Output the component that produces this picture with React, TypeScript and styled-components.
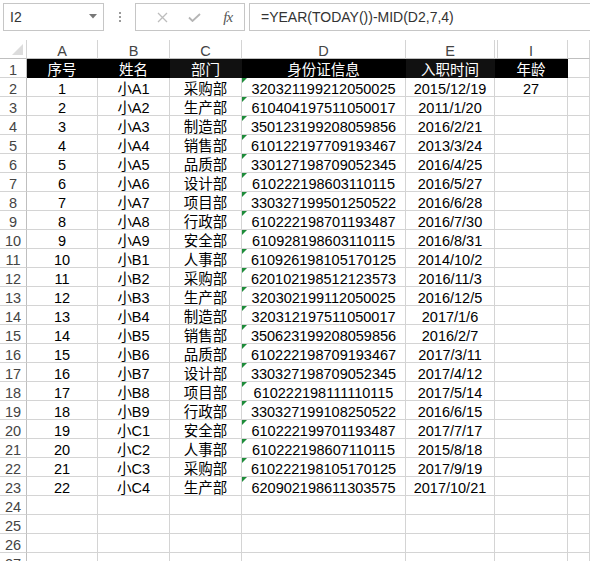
import React from "react";
import styled, { createGlobalStyle } from "styled-components";

const GlobalStyle = createGlobalStyle`
  html, body {
    margin: 0;
    padding: 0;
    background: #fff;
  }

  body {
    width: 590px;
    height: 561px;
    overflow: hidden;
    font-family: "Liberation Sans", "Noto Sans CJK SC", sans-serif;
  }
`;

const Page = styled.div`
  width: 590px;
  height: 561px;
  overflow: hidden;
  background: #fff;
`;

const FormulaBar = styled.div`
  height: 40px;
  padding: 3px 0 0 3px;
  box-sizing: border-box;
  display: flex;
  align-items: flex-start;
`;

const NameBox = styled.div`
  width: 101px;
  height: 28px;
  box-sizing: border-box;
  border: 1px solid #c6c6c6;
  display: flex;
  align-items: center;
  justify-content: space-between;
  padding: 0 6px 1px 6px;
  font-size: 14px;
  color: #333;
`;

const Grip = styled.div`
  width: 31px;
  height: 28px;
  display: flex;
  flex-direction: column;
  align-items: center;
  justify-content: center;
  gap: 2px;

  & > span {
    width: 2px;
    height: 2px;
    background: #9a9a9a;
  }
`;

const FxBox = styled.div`
  width: 110px;
  height: 28px;
  box-sizing: border-box;
  border: 1px solid #c6c6c6;
  display: grid;
  grid-template-columns: 10px 1fr 1fr 1fr;
  align-items: center;
`;

const FxButton = styled.div`
  display: flex;
  align-items: center;
  justify-content: center;
  height: 100%;
`;

const FxLabel = styled.span`
  font-family: "Liberation Serif", "DejaVu Serif", serif;
  font-style: italic;
  font-size: 15px;
  color: #555;
  letter-spacing: -1px;
`;

const FormulaInput = styled.div`
  flex: 1;
  height: 28px;
  margin-left: 4px;
  box-sizing: border-box;
  border: 1px solid #c6c6c6;
  border-right: none;
  display: flex;
  align-items: center;
  padding: 0 0 1px 11px;
  font-size: 14px;
  color: #333;
  white-space: nowrap;
`;

const Sheet = styled.div`
  display: grid;
  grid-template-columns: 27px 71px 72px 72px 164px 89px 73px 1fr;
  grid-auto-rows: 19px;
`;

const Corner = styled.div`
  position: relative;
  box-sizing: border-box;
  border-right: 1px solid #d4d4d4;
  border-bottom: 1px solid #bfbfbf;

  &::after {
    content: "";
    position: absolute;
    right: 3px;
    bottom: 3px;
    border-style: solid;
    border-width: 0 0 11px 11px;
    border-color: transparent transparent #dcdcdc transparent;
  }
`;

const ColHead = styled.div<{ $gapBefore?: boolean }>`
  position: relative;
  box-sizing: border-box;
  border-right: 1px solid #d4d4d4;
  border-bottom: 1px solid #bfbfbf;
  padding-top: 4px;
  line-height: 14px;
  font-size: 14.5px;
  color: #444;
  text-align: center;

  &::before {
    content: "";
    display: ${({ $gapBefore }) => ($gapBefore ? "block" : "none")};
    position: absolute;
    left: 2px;
    top: 0;
    bottom: 0;
    width: 1px;
    background: #d4d4d4;
  }
`;

const RowHead = styled.div`
  box-sizing: border-box;
  border-right: 1px solid #bfbfbf;
  border-bottom: 1px solid #d4d4d4;
  padding-top: 4px;
  line-height: 14px;
  font-size: 14.5px;
  color: #444;
  text-align: center;
`;

type Tone = "plain" | "black" | "charcoal";

const toneBg: Record<Tone, string> = {
  plain: "#fff",
  black: "#000",
  charcoal: "#111",
};

const Cell = styled.div<{ $tone?: Tone; $flag?: boolean }>`
  position: relative;
  box-sizing: border-box;
  border-right: 1px solid ${({ $tone = "plain" }) => ($tone === "plain" ? "#d4d4d4" : toneBg[$tone])};
  border-bottom: 1px solid ${({ $tone = "plain" }) => ($tone === "plain" ? "#d4d4d4" : toneBg[$tone])};
  background: ${({ $tone = "plain" }) => toneBg[$tone]};
  color: ${({ $tone = "plain" }) => ($tone === "plain" ? "#000" : "#fff")};
  padding-top: 4px;
  line-height: 14px;
  font-size: 14.5px;
  text-align: center;
  white-space: nowrap;
  overflow: hidden;

  &::before {
    content: "";
    display: ${({ $flag }) => ($flag ? "block" : "none")};
    position: absolute;
    left: 0;
    top: 0;
    border-style: solid;
    border-width: 5px 5px 0 0;
    border-color: #1e8c3a transparent transparent transparent;
  }
`;

const columns = ["A", "B", "C", "D", "E", "I", ""];

const headers = ["序号", "姓名", "部门", "身份证信息", "入职时间", "年龄"];

const people: [string, string, string, string][] = [
  ["小A1", "采购部", "320321199212050025", "2015/12/19"],
  ["小A2", "生产部", "610404197511050017", "2011/1/20"],
  ["小A3", "制造部", "350123199208059856", "2016/2/21"],
  ["小A4", "销售部", "610122197709193467", "2013/3/24"],
  ["小A5", "品质部", "330127198709052345", "2016/4/25"],
  ["小A6", "设计部", "610222198603110115", "2016/5/27"],
  ["小A7", "项目部", "330327199501250522", "2016/6/28"],
  ["小A8", "行政部", "610222198701193487", "2016/7/30"],
  ["小A9", "安全部", "610928198603110115", "2016/8/31"],
  ["小B1", "人事部", "610926198105170125", "2014/10/2"],
  ["小B2", "采购部", "620102198512123573", "2016/11/3"],
  ["小B3", "生产部", "320302199112050025", "2016/12/5"],
  ["小B4", "制造部", "320312197511050017", "2017/1/6"],
  ["小B5", "销售部", "350623199208059856", "2016/2/7"],
  ["小B6", "品质部", "610222198709193467", "2017/3/11"],
  ["小B7", "设计部", "330327198709052345", "2017/4/12"],
  ["小B8", "项目部", "610222198111110115", "2017/5/14"],
  ["小B9", "行政部", "330327199108250522", "2016/6/15"],
  ["小C1", "安全部", "610222199701193487", "2017/7/17"],
  ["小C2", "人事部", "610222198607110115", "2015/8/18"],
  ["小C3", "采购部", "610222198105170125", "2017/9/19"],
  ["小C4", "生产部", "620902198611303575", "2017/10/21"],
];

const TOTAL_ROWS = 28;

function Caret() {
  return (
    <svg width="8" height="5" viewBox="0 0 8 5">
      <path d="M0 0 H8 L4 4.5 Z" fill="#777" />
    </svg>
  );
}

function CancelIcon() {
  return (
    <svg width="11" height="11" viewBox="0 0 11 11">
      <path d="M1 1 L10 10 M10 1 L1 10" stroke="#bdbdbd" strokeWidth="1.3" fill="none" />
    </svg>
  );
}

function EnterIcon() {
  return (
    <svg width="13" height="9" viewBox="0 0 13 9">
      <path d="M1 4.5 L4.5 8 L12 1" stroke="#b5b5b5" strokeWidth="1.8" fill="none" />
    </svg>
  );
}

function App() {
  const rows = [];

  for (let r = 1; r <= TOTAL_ROWS; r++) {
    rows.push(<RowHead key={`h${r}`}>{r}</RowHead>);

    if (r === 1) {
      headers.forEach((h, i) => (
        rows.push(
          <Cell key={`c1-${i}`} $tone={i === 2 || i === 4 ? "charcoal" : "black"}>
            {h}
          </Cell>
        )
      ));
      rows.push(<Cell key="c1-j" />);
      continue;
    }

    const p = people[r - 2];
    if (p) {
      rows.push(<Cell key={`c${r}-a`}>{r - 1}</Cell>);
      rows.push(<Cell key={`c${r}-b`}>{p[0]}</Cell>);
      rows.push(<Cell key={`c${r}-c`}>{p[1]}</Cell>);
      rows.push(<Cell key={`c${r}-d`} $flag>{p[2]}</Cell>);
      rows.push(<Cell key={`c${r}-e`}>{p[3]}</Cell>);
      rows.push(<Cell key={`c${r}-i`}>{r === 2 ? "27" : ""}</Cell>);
      rows.push(<Cell key={`c${r}-j`} />);
    } else {
      columns.forEach((_, i) => rows.push(<Cell key={`c${r}-${i}`} />));
    }
  }

  return (
    <Page>
      <GlobalStyle />
      <FormulaBar>
        <NameBox>
          <span>I2</span>
          <Caret />
        </NameBox>
        <Grip>
          <span />
          <span />
          <span />
        </Grip>
        <FxBox>
          <span />
          <FxButton><CancelIcon /></FxButton>
          <FxButton><EnterIcon /></FxButton>
          <FxButton><FxLabel>fx</FxLabel></FxButton>
        </FxBox>
        <FormulaInput>=YEAR(TODAY())-MID(D2,7,4)</FormulaInput>
      </FormulaBar>

      <Sheet>
        <Corner />
        {columns.map((c) => (
          <ColHead key={c || "J"} $gapBefore={c === "I"}>{c}</ColHead>
        ))}
        {rows}
      </Sheet>
    </Page>
  );
}

export default App;
